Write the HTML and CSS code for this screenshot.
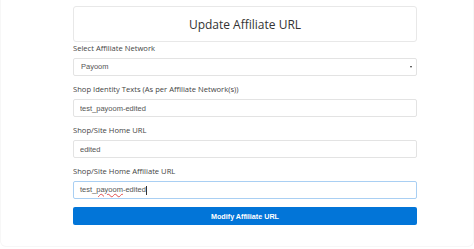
FILE: index.html
```html
<html>
<head>
  <link rel="stylesheet" href="styles.css">
</head>
<body>
  <div class="page">
    <div class="form-box">
      <div class="title-box">
        <h2>Update Affiliate URL</h2>
      </div>
      <div class="form-group">
        <label>Select Affiliate Network</label>
        <div class="select-wrap">
          <select class="field">
            <option>Payoom</option>
          </select>
        </div>
      </div>
      <div class="form-group">
        <label>Shop Identity Texts (As per Affiliate Network(s))</label>
        <input class="field" type="text" value="test_payoom-edited">
      </div>
      <div class="form-group">
        <label>Shop/Site Home URL</label>
        <input class="field" type="text" value="edited">
      </div>
      <div class="form-group">
        <label>Shop/Site Home Affiliate URL</label>
        <div class="field focused">test_<span class="typo">payoom</span>-edited<span class="caret"></span></div>
      </div>
      <button class="btn-primary">Modify Affiliate URL</button>
    </div>
  </div>
</body>
</html>
```

FILE: styles.css
```css
body {
  margin: 0;
  background-color: white;
  font-family: "Open Sans", sans-serif;
}
.page {
  height: 246px;
  border-left: 1px solid #f7f7f7;
  border-right: 1px solid #f7f7f7;
  border-bottom: 1px solid #f7f7f7;
  border-radius: 0 0 6px 6px;
}
.form-box {
  width: 344px;
  margin-left: 72px;
  padding-top: 6px;
}
.title-box {
  height: 34px;
  border: 1px solid #e8e8e8;
  border-radius: 3px;
  display: flex;
  align-items: center;
  justify-content: center;
}
.title-box h2 {
  margin: 0;
  font-size: 12px;
  font-weight: normal;
  color: #333;
}
.form-group {
  margin-bottom: 7px;
}
.form-group label {
  display: block;
  height: 12px;
  line-height: 12px;
  margin-bottom: 4px;
  font-size: 7.6px;
  color: #444;
}
.field {
  display: block;
  box-sizing: border-box;
  width: 100%;
  height: 18px;
  margin: 0;
  padding: 0 6px;
  border: 1px solid #e3e3e3;
  border-radius: 2px;
  background-color: white;
  font-family: "Liberation Sans", Arial, sans-serif;
  font-size: 7.5px;
  line-height: 16px;
  color: #555;
  outline: none;
}
.select-wrap {
  position: relative;
}
.select-wrap select {
  -webkit-appearance: none;
  appearance: none;
  padding-left: 7px;
}
.select-wrap::after {
  content: "";
  position: absolute;
  right: 5px;
  top: 8px;
  border-left: 1.5px solid transparent;
  border-right: 1.5px solid transparent;
  border-top: 2.5px solid #333;
}
.focused {
  border-color: #a9cff3;
}
.typo {
  text-decoration: underline wavy #e05050;
  text-decoration-thickness: 0.5px;
}
.caret {
  display: inline-block;
  width: 1px;
  height: 9px;
  background-color: #333;
  vertical-align: middle;
}
.btn-primary {
  display: block;
  width: 100%;
  height: 18px;
  margin-top: 8px;
  padding: 0;
  border: none;
  border-radius: 2px;
  background-color: #0275d8;
  color: white;
  font-family: "Liberation Sans", Arial, sans-serif;
  font-size: 7.2px;
  font-weight: bold;
}
```
